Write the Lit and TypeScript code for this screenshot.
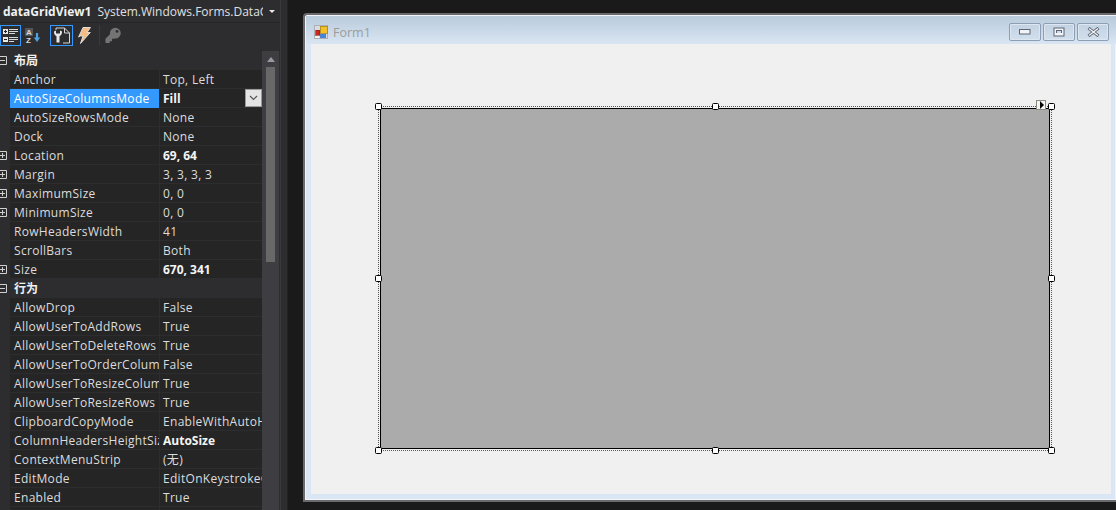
import { LitElement, html, css, svg } from "lit";
import { customElement } from "lit/decorators.js";

type Row = { n: string; v?: string; bold?: boolean; exp?: boolean; sel?: boolean; cat?: boolean };
const rows: Row[] = [
  { n: "布局", cat: true },
  { n: "Anchor", v: "Top, Left" },
  { n: "AutoSizeColumnsMode", v: "Fill", bold: true, sel: true },
  { n: "AutoSizeRowsMode", v: "None" },
  { n: "Dock", v: "None" },
  { n: "Location", v: "69, 64", bold: true, exp: true },
  { n: "Margin", v: "3, 3, 3, 3", exp: true },
  { n: "MaximumSize", v: "0, 0", exp: true },
  { n: "MinimumSize", v: "0, 0", exp: true },
  { n: "RowHeadersWidth", v: "41" },
  { n: "ScrollBars", v: "Both" },
  { n: "Size", v: "670, 341", bold: true, exp: true },
  { n: "行为", cat: true },
  { n: "AllowDrop", v: "False" },
  { n: "AllowUserToAddRows", v: "True" },
  { n: "AllowUserToDeleteRows", v: "True" },
  { n: "AllowUserToOrderColumns", v: "False" },
  { n: "AllowUserToResizeColumns", v: "True" },
  { n: "AllowUserToResizeRows", v: "True" },
  { n: "ClipboardCopyMode", v: "EnableWithAutoHeaderText" },
  { n: "ColumnHeadersHeightSizeMode", v: "AutoSize", bold: true },
  { n: "ContextMenuStrip", v: "(无)" },
  { n: "EditMode", v: "EditOnKeystrokeOrF2" },
  { n: "Enabled", v: "True" },
];

const box = (minus: boolean) => html`<svg class="exp" width="7" height="9" viewBox="0 0 7 9">
  <path d="M-1 .5H6.5V8.5H-1" fill="none" stroke="#d0d0d0"/>
  <path d="M0 4.5H5" stroke="#d0d0d0"/>
  ${minus ? "" : svg`<path d="M2.5 2V7" stroke="#d0d0d0"/>`}
</svg>`;

const iconCat = html`<svg width="15" height="14" viewBox="0 0 15 14" shape-rendering="crispEdges">
  <rect x="0" y="0" width="5" height="5" fill="#e8e8e8"/><path d="M1 2.5H4M2.5 1V4" stroke="#222"/>
  <rect x="0" y="8" width="5" height="5" fill="#e8e8e8"/><path d="M1 10.5H4" stroke="#222"/>
  <path d="M6 .5H15M6 2.5H15M6 4.5H12M6 8.5H15M6 10.5H15M6 12.5H11" stroke="#d8d8d8"/>
</svg>`;
const iconAz = html`<svg width="16" height="16" viewBox="0 0 16 16">
  <rect x="0" y="0" width="8" height="8" fill="#555558"/>
  <text x="1" y="7" class="az">A</text><text x="1" y="15" class="az">Z</text>
  <path d="M12 5V11" stroke="#4aa3e0" stroke-width="2.2"/><path d="M8.8 9.5H15.2L12 14Z" fill="#4aa3e0"/>
</svg>`;
const iconProp = html`<svg width="18" height="17" viewBox="0 0 18 17">
  <path d="M3 3V1H11.5L16.5 6V16H10" fill="none" stroke="#d8d8d8"/>
  <path d="M11.5 1V6H16.5" fill="none" stroke="#d8d8d8"/>
  <path d="M1 4.5C1 8 3 9 3.5 9V15.5H6.5V9C7 9 9 8 9 4.5L7 3.5V6.5H3V3.5Z" fill="#e8e8e8"/>
</svg>`;
const iconBolt = html`<svg width="13" height="17" viewBox="0 0 13 17">
  <path d="M5 .5H12.5L9 5.5H12.3L2.5 16.5L5 9H2.2L.6 10Z" fill="#f4bd85" stroke="#e8e8e8" stroke-width=".9"/>
</svg>`;
const iconKey = html`<svg width="17" height="17" viewBox="0 0 17 17">
  <circle cx="11" cy="6" r="5.7" fill="#747474"/><circle cx="12.8" cy="4.2" r="1.5" fill="#2d2d30"/>
  <path d="M7.5 5L.5 12V16.5H5V14.5H7.5V12H9.5L12 10Z" fill="#747474"/>
</svg>`;
const iconForm = html`<svg class="fi" width="14" height="14" viewBox="0 0 14 14" shape-rendering="crispEdges">
  <rect x=".5" y=".5" width="13" height="13" fill="#d8dde2" stroke="#aab0b6"/>
  <rect x="6" y="1" width="7" height="7" fill="#f5c12a" stroke="#a9861c" stroke-width=".8"/>
  <rect x="1.5" y="5" width="4" height="5" fill="#c92a20" stroke="#8f1f18" stroke-width=".6"/>
  <rect x="6" y="9" width="6" height="4" fill="#4a82d8"/>
  <rect x="1" y="11" width="4" height="2" fill="#f4f4f4"/>
</svg>`;

@customElement("app-root")
export class AppRoot extends LitElement {
  static styles = css`
    :host { display: flex; width: 1116px; height: 510px; overflow: hidden; background: #1a1a1a;
      font-family: "Open Sans", "Noto Sans CJK SC", sans-serif; font-size: 12px; color: #dcdcdc; }
    .panel { width: 280px; height: 510px; flex: none; background: #2d2d30; display: flex; flex-direction: column; overflow: hidden; }
    .head { height: 23px; flex: none; display: flex; align-items: center; padding: 0 0 0 3px; box-sizing: border-box; white-space: nowrap; border-bottom: 1px solid #252527; }
    .head b { font-weight: 700; color: #f1f1f1; font-size: 12px; margin-right: 6px; }
    .head .type { width: 166px; overflow: hidden; color: #e0e0e0; font-size: 12px; flex: none; }
    .head .tri { width: 0; height: 0; border: 3.5px solid transparent; border-top: 3.5px solid #e8e8e8; border-bottom: 0; margin-left: 6px; }
    .tools { height: 28px; flex: none; display: flex; align-items: flex-start; padding-top: 2px; box-sizing: border-box; }
    .tb { width: 21px; height: 21px; box-sizing: border-box; display: flex; align-items: center; justify-content: center; flex: none; border: 1px solid transparent; }
    .tb.on { border-color: #3399ff; }
    .tb.az-b { width: 24px; }
    .tb.pg { width: 23px; }
    .tb.bolt { width: 23px; }
    .tb.key { width: 18px; }
    .az { font: 700 8px "Liberation Sans", sans-serif; fill: #d8d8d8; }
    .sep { width: 1px; height: 20px; background: #3a3a3f; flex: none; margin: 0 4px 0 3px; }
    .sep.a { margin: 0 2px; background: #2d2d30; }
    .body { flex: 1; display: flex; min-height: 0; }
    .grid { width: 262px; flex: none; display: flex; flex-direction: column; }
    .row { height: 19px; flex: none; display: flex; box-sizing: border-box; line-height: 20px; letter-spacing: .3px; }
    .gut { width: 10px; flex: none; display: flex; align-items: center; padding-bottom: 1px; box-sizing: border-box; }
    .exp { display: block; }
    .name { width: 149px; flex: none; padding-left: 4px; box-sizing: border-box; overflow: hidden; white-space: nowrap; background: #252526; border-bottom: 1px solid #2d2d30; }
    .val { flex: 1; min-width: 0; margin-left: 1px; padding-left: 3px; box-sizing: border-box; overflow: hidden; white-space: nowrap; background: #252526; border-bottom: 1px solid #2d2d30; position: relative; }
    .val.b { font-weight: 700; color: #f4f4f4; letter-spacing: 0; }
    .row.sel .name { background: #3399ff; color: #fff; border-bottom-color: #3399ff; }
    .row.cat .name { background: none; border: 0; font-weight: 700; color: #f1f1f1; width: 252px; letter-spacing: 0; }
    .combo { position: absolute; right: 0; top: 0; width: 17px; height: 18px; box-sizing: border-box; background: #e4e4e4; border: 1px solid #9a9a9a; display: flex; align-items: center; justify-content: center; }
    .scroll { width: 17px; flex: none; background: #3e3e42; display: flex; flex-direction: column; align-items: center; }
    .up { width: 0; height: 0; border: 4.5px solid transparent; border-bottom: 5px solid #9a9a9e; border-top: 0; margin: 6px 0 5px; flex: none; }
    .thumb { width: 9px; height: 195px; background: #686868; flex: none; }
    .gap { width: 8px; flex: none; height: 510px; background: #2d2d30; border-left: 1px solid #3a3a3d; border-right: 1px solid #222224; box-sizing: border-box; }
    .design { flex: 1; min-width: 0; padding: 13px 0 0 15px; box-sizing: border-box; height: 510px; overflow: hidden; }
    .win { width: 813px; height: 489px; box-sizing: border-box; background: #dae6f3; border: 2px solid #6a6a6c; border-right: 0; border-radius: 4px 0 0 0; box-shadow: inset 0 0 0 1px #f1f5fa; display: flex; flex-direction: column; }
    .title { height: 28px; flex: none; margin: 1px 0 0 1px; display: flex; align-items: center; padding: 0 7px 0 8px; box-sizing: border-box; background: linear-gradient(#b9cbdc, #d9e5f2); }
    .fi { margin-top: 3px; flex: none; }
    .title .t { color: #9c9c9c; font-size: 12.5px; margin-left: 5px; flex: 1; padding-top: 4px; }
    .wb { width: 32px; height: 18px; box-sizing: border-box; border: 1px solid #8d9db4; border-radius: 2px; margin: 4px 0 0 2px; display: flex; align-items: center; justify-content: center; background: linear-gradient(#c3d2e2, #d2dfed); box-shadow: inset 0 0 0 1px #dde7f1; }
    .client { width: 800px; height: 450px; flex: none; margin-left: 6px; background: #f0f0f0; padding: 64px 0 0 69px; box-sizing: border-box; }
    .dg { width: 670px; height: 341px; background: #ababab; box-sizing: border-box; border: 1px solid #000; position: relative; }
    .frame { position: absolute; inset: -3px; border: 1px dotted #555; pointer-events: none; }
    .h { position: absolute; width: 7px; height: 7px; box-sizing: border-box; background: #fff; border: 1px solid #000; border-radius: 1.5px; }
    .tag { position: absolute; left: 655px; top: -9px; width: 10px; height: 10px; box-sizing: border-box; background: #f4f4f0; border: 1px solid #8a8a80; display: flex; align-items: center; justify-content: center; }
  `;

  private handle(x: number, y: number) {
    return html`<div class="h" style="left:${x}px;top:${y}px"></div>`;
  }

  render() {
    return html`
      <div class="panel">
        <div class="head"><b>dataGridView1</b><span class="type">System.Windows.Forms.DataGridView</span><span class="tri"></span></div>
        <div class="tools">
          <div class="tb on">${iconCat}</div>
          <div class="tb az-b">${iconAz}</div>
          <div class="sep a"></div>
          <div class="tb on pg">${iconProp}</div>
          <div class="tb bolt">${iconBolt}</div>
          <div class="sep"></div>
          <div class="tb key">${iconKey}</div>
        </div>
        <div class="body">
          <div class="grid">
            ${rows.map((r) => html`
              <div class="row ${r.sel ? "sel" : ""} ${r.cat ? "cat" : ""}">
                <div class="gut">${r.cat ? box(true) : r.exp ? box(false) : ""}</div>
                <div class="name">${r.n}</div>
                ${r.cat ? "" : html`<div class="val ${r.bold ? "b" : ""}">${r.v}${r.sel ? html`<span class="combo"><svg width="9" height="6" viewBox="0 0 9 6"><path d="M1 1L4.5 4.5L8 1" fill="none" stroke="#555" stroke-width="1.2"/></svg></span>` : ""}</div>`}
              </div>`)}
            <div class="row"><div class="gut"></div><div class="name"></div><div class="val"></div></div>
          </div>
          <div class="scroll"><div class="up"></div><div class="thumb"></div></div>
        </div>
      </div>
      <div class="gap"></div>
      <div class="design">
        <div class="win">
          <div class="title">
            ${iconForm}<span class="t">Form1</span>
            <div class="wb"><svg width="12" height="6" viewBox="0 0 12 6"><rect x=".5" y=".5" width="10.5" height="4.5" fill="#f0f3f7" stroke="#5e6675"/></svg></div>
            <div class="wb"><svg width="12" height="10" viewBox="0 0 12 10"><rect x="1" y="1" width="10" height="8" fill="#f0f3f7" stroke="#5e6675"/><rect x="3" y="3" width="6" height="3" fill="#5e6675"/><rect x="4" y="4" width="4" height="2" fill="#d0dcea"/></svg></div>
            <div class="wb"><svg width="13" height="10" viewBox="0 0 13 10"><path d="M1.5 1L11.5 9M11.5 1L1.5 9" stroke="#5e6675" stroke-width="3"/><path d="M2 1.5L11 8.5M11 1.5L2 8.5" stroke="#f4f6f9" stroke-width="1.3"/></svg></div>
          </div>
          <div class="client">
            <div class="dg">
              <div class="frame"></div>
              ${this.handle(-6, -6)}${this.handle(331, -6)}${this.handle(667, -6)}
              ${this.handle(-6, 166)}${this.handle(667, 166)}
              ${this.handle(-6, 338)}${this.handle(331, 338)}${this.handle(667, 338)}
              <div class="tag"><svg width="6" height="8" viewBox="0 0 6 8"><path d="M1 0V8M2 0L6 4L2 8Z" fill="#000"/></svg></div>
            </div>
          </div>
        </div>
      </div>
    `;
  }
}
